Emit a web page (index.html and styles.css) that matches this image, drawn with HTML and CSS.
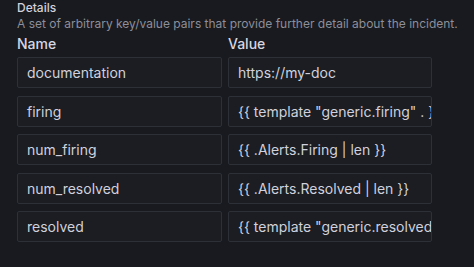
FILE: index.html
```html
<!DOCTYPE html>
<html>
<head>
<meta charset="utf-8">
<link rel="stylesheet" href="styles.css">
</head>
<body>
<div class="page">
  <div class="section-title">Details</div>
  <div class="section-desc">A set of arbitrary key/value pairs that provide further detail about the incident.</div>
  <div class="grid">
    <div class="col-label">Name</div>
    <div class="col-label">Value</div>
    <div class="field">documentation</div>
    <div class="field">https://my-doc</div>
    <div class="field">firing</div>
    <div class="field">{{ template "generic.firing" . }}</div>
    <div class="field">num_firing</div>
    <div class="field">{{ .Alerts.Firing | len }}</div>
    <div class="field">num_resolved</div>
    <div class="field">{{ .Alerts.Resolved | len }}</div>
    <div class="field">resolved</div>
    <div class="field">{{ template "generic.resolved" . }}</div>
  </div>
</div>
</body>
</html>
```
FILE: styles.css
```css
html, body {
  margin: 0;
  padding: 0;
  background: #181a1f;
}
body {
  font-family: Inter, "Noto Sans", sans-serif;
  color: #d0d1dc;
  width: 474px;
  height: 267px;
  overflow: hidden;
}
.page {
  padding: 0 0 0 17px;
}
.section-title {
  font-size: 12px;
  font-weight: 500;
  line-height: 16px;
  color: #d0d1dc;
}
.section-desc {
  font-size: 12px;
  line-height: 16px;
  color: #8d8e99;
  white-space: nowrap;
}
.grid {
  display: grid;
  grid-template-columns: 205px 204px;
  column-gap: 6px;
  row-gap: 7.5px;
  margin-top: 3px;
}
.col-label {
  font-size: 14px;
  font-weight: 500;
  line-height: 18px;
  color: #d6d7e0;
  margin-bottom: -3.5px;
}
.field {
  height: 31px;
  box-sizing: border-box;
  border: 1px solid #2e3037;
  border-radius: 2px;
  background: #1b1d23;
  padding: 0 9px;
  font-size: 14px;
  line-height: 29px;
  white-space: nowrap;
  overflow: hidden;
  text-overflow: clip;
  color: #d0d1dc;
}
```
